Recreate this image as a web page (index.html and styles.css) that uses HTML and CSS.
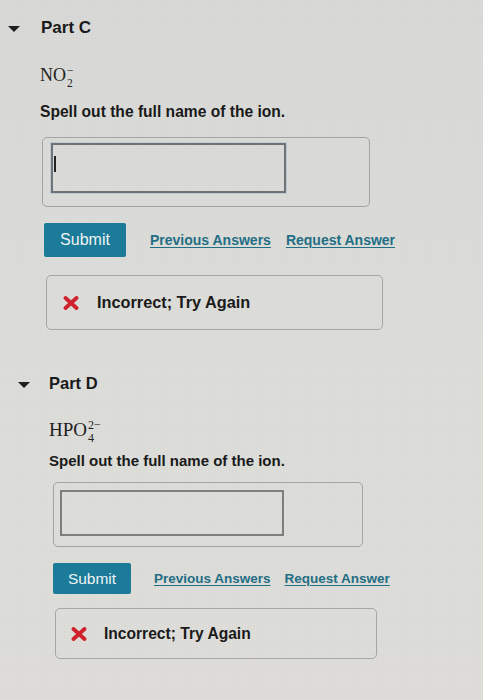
FILE: index.html
```html
<!DOCTYPE html>
<html lang="en">
<head>
<meta charset="utf-8">
<title>Parts C and D</title>
<link rel="stylesheet" href="styles.css">
</head>
<body>
<main class="page">
  <section class="part part-c">
    <div class="part-header">
      <span class="caret"></span>
      <h2 class="part-title">Part C</h2>
    </div>
    <div class="part-body">
      <div class="formula">NO<span class="sub-sup"><span class="sup">−</span><span class="sub">2</span></span></div>
      <p class="prompt">Spell out the full name of the ion.</p>
      <div class="answer-box">
        <div class="answer-input focused"><span class="cursor"></span></div>
      </div>
      <div class="actions">
        <button class="submit" type="button">Submit</button>
        <a class="link" href="#">Previous Answers</a>
        <a class="link" href="#">Request Answer</a>
      </div>
      <div class="feedback">
        <svg class="x-icon" viewBox="0 0 16 14" aria-hidden="true"><path d="M2.5 2 L13.5 12 M13.5 2 L2.5 12" stroke="#cf222c" stroke-width="3.8" stroke-linecap="round"/></svg>
        <span class="feedback-text">Incorrect; Try Again</span>
      </div>
    </div>
  </section>

  <section class="part part-d">
    <div class="part-header">
      <span class="caret"></span>
      <h2 class="part-title">Part D</h2>
    </div>
    <div class="part-body">
      <div class="formula">HPO<span class="sub-sup"><span class="sup">2−</span><span class="sub">4</span></span></div>
      <p class="prompt">Spell out the full name of the ion.</p>
      <div class="answer-box">
        <div class="answer-input"></div>
      </div>
      <div class="actions">
        <button class="submit" type="button">Submit</button>
        <a class="link" href="#">Previous Answers</a>
        <a class="link" href="#">Request Answer</a>
      </div>
      <div class="feedback">
        <svg class="x-icon" viewBox="0 0 16 14" aria-hidden="true"><path d="M2.5 2 L13.5 12 M13.5 2 L2.5 12" stroke="#cf222c" stroke-width="3.8" stroke-linecap="round"/></svg>
        <span class="feedback-text">Incorrect; Try Again</span>
      </div>
    </div>
  </section>
</main>
</body>
</html>
```

FILE: styles.css
```css
html, body {
  margin: 0;
  padding: 0;
}

body {
  background-color: #d9dad6;
  background-image:
    repeating-linear-gradient(90deg, rgba(255,255,255,0.06) 0 1px, transparent 1px 3px),
    repeating-linear-gradient(0deg, rgba(255,255,255,0.05) 0 1px, transparent 1px 3px),
    linear-gradient(180deg, #d6d7d4 0%, #dadbd7 50%, #dbdad6 100%);
  font-family: "Liberation Sans", Arial, sans-serif;
  color: #1a1a1a;
  width: 483px;
  height: 700px;
  overflow: hidden;
}

.page {
  display: flex;
  flex-direction: column;
}

.part {
  display: flex;
  flex-direction: column;
}

.part-header {
  display: flex;
  align-items: center;
  height: 20px;
}

.caret {
  width: 0;
  height: 0;
  border-left: 6px solid transparent;
  border-right: 6px solid transparent;
  border-top: 6px solid #1f1f1f;
}

.part-title {
  margin: 0;
  font-weight: bold;
  line-height: 20px;
}

.part-body {
  display: flex;
  flex-direction: column;
  align-items: flex-start;
}

.formula {
  font-family: "Liberation Serif", "Times New Roman", serif;
  color: #1e1e1e;
  display: flex;
  align-items: flex-start;
}

.sub-sup {
  display: inline-flex;
  flex-direction: column;
  align-items: flex-start;
  gap: 1px;
  margin-left: 1px;
}

.sup, .sub {
  font-size: 0.64em;
  line-height: 1;
  height: 1em;
  overflow: visible;
}

.prompt {
  margin: 0;
  font-weight: bold;
  line-height: 20px;
}

.answer-box {
  box-sizing: border-box;
  border: 1px solid #a3a4a1;
  border-radius: 5px;
}

.answer-input {
  box-sizing: border-box;
  border: 2px solid #7e7f7d;
  display: flex;
  align-items: center;
}

.answer-input.focused {
  border-color: #6f7276;
  box-shadow: 0 0 0 1px rgba(170,190,210,0.6);
}

.cursor {
  width: 1.5px;
  height: 16px;
  background: #222;
  margin-left: 1px;
  margin-top: -8px;
}

.actions {
  display: flex;
  align-items: center;
}

.submit {
  box-sizing: border-box;
  border: none;
  border-radius: 2px;
  background: #1b7b98;
  color: #eef4f6;
  font-family: "Liberation Sans", Arial, sans-serif;
  padding: 0;
  display: flex;
  align-items: center;
  justify-content: center;
}

.link {
  color: #226e85;
  font-weight: bold;
  text-decoration: underline;
  text-decoration-thickness: 1px;
  text-underline-offset: 2px;
}

.feedback {
  box-sizing: border-box;
  border: 1px solid #a6a7a4;
  border-radius: 5px;
  display: flex;
  align-items: center;
}

.x-icon {
  display: block;
  flex: none;
}

.feedback-text {
  font-weight: bold;
}

/* Part C */
.part-c {
  padding-top: 18px;
}
.part-c .caret {
  margin-left: 8px;
  margin-right: 21px;
  margin-top: 1px;
}
.part-c .part-title {
  font-size: 17px;
}
.part-c .part-body {
  padding-left: 40px;
}
.part-c .formula {
  margin-top: 25px;
  font-size: 18px;
  line-height: 24px;
  height: 24px;
}
.part-c .sub-sup {
  margin-top: 2px;
}
.part-c .prompt {
  margin-top: 15px;
  font-size: 15.6px;
}
.part-c .answer-box {
  margin-top: 15px;
  margin-left: 2px;
  width: 328px;
  height: 70px;
  padding: 5px 0 0 8px;
}
.part-c .answer-input {
  width: 235px;
  height: 50px;
}
.part-c .actions {
  margin-top: 16px;
  margin-left: 4px;
}
.part-c .submit {
  width: 82px;
  height: 34px;
  font-size: 16px;
}
.part-c .link {
  font-size: 14px;
}
.part-c .link:first-of-type {
  margin-left: 24px;
}
.part-c .link + .link {
  margin-left: 15px;
}
.part-c .feedback {
  margin-top: 18px;
  margin-left: 6px;
  width: 337px;
  height: 55px;
  padding-left: 16px;
}
.part-c .x-icon {
  width: 16px;
  height: 14px;
  margin-right: 18px;
}
.part-c .feedback-text {
  font-size: 16.3px;
}

/* Part D */
.part-d {
  padding-top: 43px;
}
.part-d .caret {
  border-left-width: 6.5px;
  border-right-width: 6.5px;
  margin-left: 18px;
  margin-right: 19px;
  margin-top: 3px;
}
.part-d .part-title {
  font-size: 16.5px;
}
.part-d .part-body {
  padding-left: 49px;
}
.part-d .formula {
  margin-top: 24px;
  font-size: 19px;
  line-height: 26px;
  height: 26px;
}
.part-d .sub-sup {
  margin-top: 2px;
}
.part-d .prompt {
  margin-top: 8px;
  font-size: 15px;
}
.part-d .answer-box {
  margin-top: 11px;
  margin-left: 4px;
  width: 310px;
  height: 65px;
  padding: 7px 0 0 6px;
}
.part-d .answer-input {
  width: 224px;
  height: 46px;
}
.part-d .actions {
  margin-top: 16px;
  margin-left: 4px;
}
.part-d .submit {
  width: 78px;
  height: 31px;
  font-size: 15.5px;
}
.part-d .link {
  font-size: 13.5px;
}
.part-d .link:first-of-type {
  margin-left: 23px;
}
.part-d .link + .link {
  margin-left: 14px;
}
.part-d .feedback {
  margin-top: 14px;
  margin-left: 6px;
  width: 322px;
  height: 51px;
  padding-left: 15px;
}
.part-d .x-icon {
  width: 16px;
  height: 14px;
  margin-right: 17px;
}
.part-d .feedback-text {
  font-size: 15.6px;
}
```
